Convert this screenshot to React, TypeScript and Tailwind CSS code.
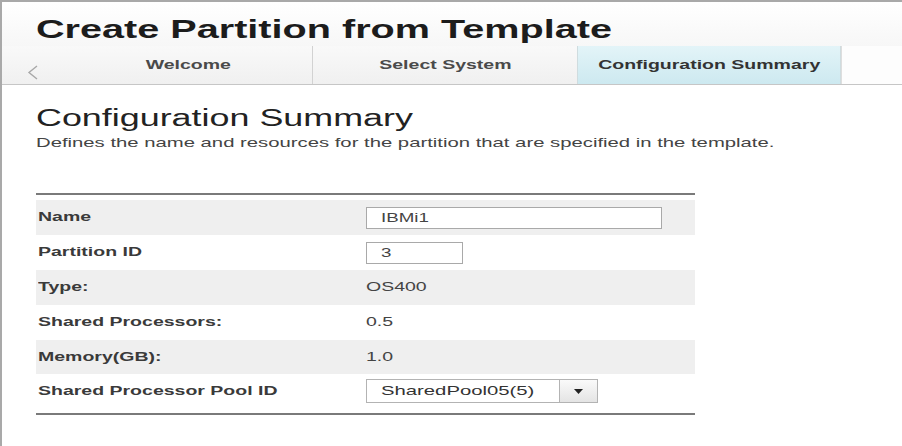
import type { ReactNode } from "react";

// the capture is stretched sideways, so text glyphs are widened to match
function Wide({
  children,
  center = false,
}: {
  children: ReactNode;
  center?: boolean;
}) {
  return (
    <span
      className={
        center
          ? "inline-block whitespace-nowrap origin-center scale-x-[1.56]"
          : "inline-block whitespace-nowrap origin-left scale-x-[1.56]"
      }
    >
      {children}
    </span>
  );
}

const rows = [
  { label: "Name", kind: "name", value: "IBMi1", h: "h-[35px]" },
  { label: "Partition ID", kind: "id", value: "3", h: "h-[35px]" },
  { label: "Type:", kind: "text", value: "OS400", h: "h-[35px]" },
  { label: "Shared Processors:", kind: "text", value: "0.5", h: "h-[35px]" },
  { label: "Memory(GB):", kind: "text", value: "1.0", h: "h-[34px]" },
  { label: "Shared Processor Pool ID", kind: "select", value: "SharedPool05(5)", h: "h-[34px]" },
];

function Value({ kind, value }: { kind: string; value: string }) {
  if (kind === "name" || kind === "id") {
    return (
      <div
        className={
          kind === "name"
            ? "flex h-[22px] w-[296px] items-center border border-[#a9a9a9] bg-white pl-[14px] text-[12px] text-[#444]"
            : "flex h-[22px] w-[97px] items-center border border-[#a9a9a9] bg-white pl-[14px] text-[12px] text-[#444]"
        }
      >
        <Wide>{value}</Wide>
      </div>
    );
  }
  if (kind === "select") {
    return (
      <div className="flex h-[24px] w-[232px] border border-[#b3b3b3] bg-white">
        <div className="flex flex-1 items-center pl-[14px] text-[13px] text-[#333]">
          <Wide>{value}</Wide>
        </div>
        <div className="flex w-[38px] items-center justify-center border-l border-[#b3b3b3] bg-gradient-to-b from-[#fafafa] to-[#e4e4e4]">
          <svg width="9" height="5" viewBox="0 0 9 5">
            <path d="M0 0 L9 0 L4.5 5 Z" fill="#222" />
          </svg>
        </div>
      </div>
    );
  }
  return (
    <span className="text-[12.5px] text-[#444]">
      <Wide>{value}</Wide>
    </span>
  );
}

export default function App() {
  return (
    <div className="h-[446px] w-[902px] overflow-hidden border-l-2 border-t-2 border-[#a9a9a9] bg-white font-['Liberation_Sans',Arial,sans-serif]">
      {/* header */}
      <div className="h-[44px] bg-gradient-to-b from-white to-[#f7f7f7] pl-[34px] pt-[15px]">
        <h1 className="text-[25.4px] font-bold leading-[25px] text-[#1c1c1c]">
          <Wide>Create Partition from Template</Wide>
        </h1>
      </div>

      {/* wizard steps */}
      <div className="flex h-[39px] border-b border-[#c6c6c6] bg-gradient-to-b from-[#f9f9f9] to-[#f0f0f0] text-[12.5px] font-bold text-[#4a4a4a]">
        <div className="flex w-[63px] items-end pb-[4px] pl-[25px]">
          <svg width="12" height="15" viewBox="0 0 12 15">
            <polyline points="10,1 2,7.5 10,14" fill="none" stroke="#a8a8a8" strokeWidth="1.4" />
          </svg>
        </div>
        <div className="flex w-[247px] items-center justify-center">
          <Wide center>Welcome</Wide>
        </div>
        <div className="flex w-[265px] items-center justify-center border-l border-[#d2d2d2]">
          <Wide center>Select System</Wide>
        </div>
        <div className="flex w-[264px] items-center justify-center border-x border-[#cfdcdf] bg-gradient-to-b from-[#e3f4f8] to-[#cde9f0] text-[#333]">
          <Wide center>Configuration Summary</Wide>
        </div>
        <div className="flex-1 border-l border-[#dedede] bg-[#fdfdfd]" />
      </div>

      {/* content */}
      <div className="pl-[34px] pt-[22px]">
        <h2 className="text-[23px] leading-[23px] text-[#222]">
          <Wide>Configuration Summary</Wide>
        </h2>
        <p className="mt-[6px] text-[13px] leading-[14px] text-[#444]">
          <Wide>Defines the name and resources for the partition that are specified in the template.</Wide>
        </p>

        <div className="mt-[43px] w-[659px] border-y-2 border-[#7a7a7a] pb-[5px] pt-[5px]">
          {rows.map((r, i) => (
            <div
              key={r.label}
              className={
                i % 2 === 0
                  ? `flex items-center ${r.h} bg-[#efefef]`
                  : `flex items-center ${r.h} bg-white`
              }
            >
              <div className="w-[330px] pl-[2px] text-[12.5px] font-bold text-[#3a3a3a]">
                <Wide>{r.label}</Wide>
              </div>
              <Value kind={r.kind} value={r.value} />
            </div>
          ))}
        </div>
      </div>
    </div>
  );
}
